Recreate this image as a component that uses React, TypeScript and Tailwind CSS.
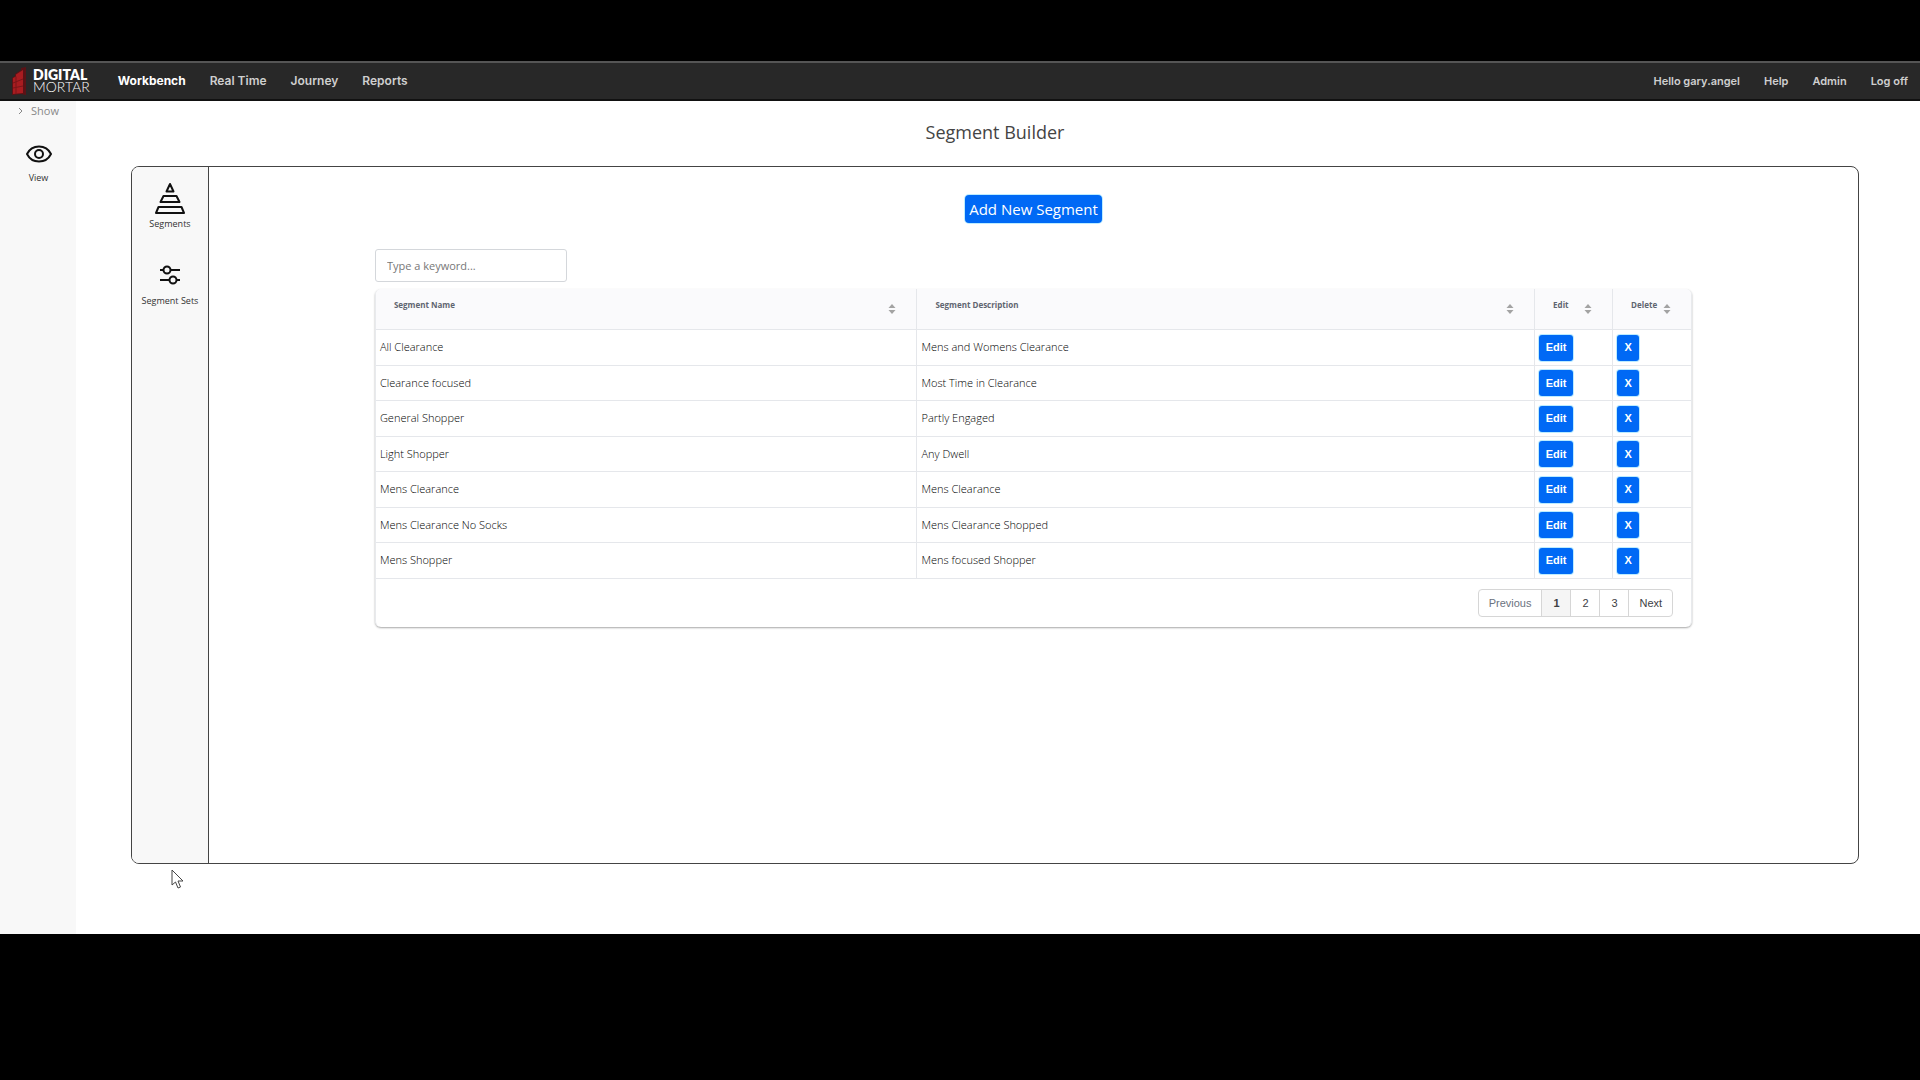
import { useState } from "react";

const SANS = "font-['Open_Sans','Noto_Sans',sans-serif]";

const segments = [
  { name: "All Clearance", description: "Mens and Womens Clearance" },
  { name: "Clearance focused", description: "Most Time in Clearance" },
  { name: "General Shopper", description: "Partly Engaged" },
  { name: "Light Shopper", description: "Any Dwell" },
  { name: "Mens Clearance", description: "Mens Clearance" },
  { name: "Mens Clearance No Socks", description: "Mens Clearance Shopped" },
  { name: "Mens Shopper", description: "Mens focused Shopper" },
];

function Logo() {
  return (
    <a href="#" className="flex items-center gap-[7px]" aria-label="Digital Mortar">
      <svg width="14" height="29" viewBox="0 0 14 29" aria-hidden="true">
        <path d="M0 11 L3 9 V7 L9 3 V1 L14 0 V28 L9 27 L0 28 Z" fill="#5c1216" />
        <path d="M1 11 L4 9.500 V7.500 L11 3 V26 L1 27 Z" fill="#a81c20" />
        <path d="M4 9.500 V27 M1 16 L11 12 M1 21 L11 19" stroke="#7a1518" strokeWidth="1" />
      </svg>
      <span className="flex flex-col font-['Lato',sans-serif] text-sm leading-3 text-white">
        <span className="font-extrabold">DIGITAL</span>
        <span className="font-light">MORTAR</span>
      </span>
    </a>
  );
}

function TopBar() {
  const link = "hover:text-white";
  return (
    <header className="flex h-10 items-center justify-between border-t-2 border-b-2 border-t-[#555] border-b-[#111] bg-[#282828] pr-3 pl-3 font-['Inter',sans-serif] text-xs font-semibold text-[#cfcfcf]">
      <div className="flex items-center gap-7">
        <Logo />
        <nav className="flex items-center gap-6">
          <a href="#" className="font-bold text-white">Workbench</a>
          <a href="#" className={link}>Real Time</a>
          <a href="#" className={link}>Journey</a>
          <a href="#" className={link}>Reports</a>
        </nav>
      </div>
      <nav className="flex items-center gap-6 text-[11px]">
        <a href="#" className={link}>Hello gary.angel</a>
        <a href="#" className={link}>Help</a>
        <a href="#" className={link}>Admin</a>
        <a href="#" className={link}>Log off</a>
      </nav>
    </header>
  );
}

function EyeIcon() {
  return (
    <svg width="26" height="18" viewBox="0 0 26 18" fill="none" stroke="#111" strokeWidth="2" aria-hidden="true">
      <path d="M1 9 C6 -1 20 -1 25 9 C20 19 6 19 1 9 Z" strokeLinejoin="round" />
      <circle cx="13" cy="9" r="4" />
    </svg>
  );
}

function PyramidIcon() {
  return (
    <svg width="30" height="32" viewBox="0 0 30 32" fill="none" stroke="#111" strokeWidth="2" strokeLinejoin="round" aria-hidden="true">
      <path d="M15 2 L18.5 9.5 H11.5 Z" />
      <path d="M8.500 14 H21.500 L24.5 20 H5.500 Z" />
      <path d="M3.500 25 H26.500 L29 31 H1 Z" />
    </svg>
  );
}

function SlidersIcon() {
  return (
    <svg width="20" height="20" viewBox="0 0 20 20" fill="none" stroke="#111" strokeWidth="2" aria-hidden="true">
      <path d="M0 5 H3 M11 5 H20 M0 15 H9 M17 15 H20" />
      <circle cx="7" cy="5" r="3.500" />
      <circle cx="13" cy="15" r="3.500" />
    </svg>
  );
}

function SortIcon() {
  return (
    <svg width="8" height="10" viewBox="0 0 8 10" fill="#a3a3a3" aria-hidden="true">
      <path d="M4 0 L7.500 4 H0.500 Z" />
      <path d="M4 10 L7.500 6 H0.500 Z" />
    </svg>
  );
}

function SortHeader({ label }: { label: string }) {
  return (
    <th className="border-r border-b border-[#e5e7eb] bg-[#fafafc] p-0 last:border-r-0">
      <button className="flex w-full items-center justify-between pr-5 pl-[18px]">
        <span className="pb-2 text-[8px] leading-3 font-bold text-[#5f6570]">{label}</span>
        <SortIcon />
      </button>
    </th>
  );
}

function Pagination() {
  const [page, setPage] = useState(1);
  const base = "h-full border-r border-[#d6d6d6] text-[#3d4044]";
  return (
    <div className="flex h-7 overflow-hidden rounded-sm border border-[#d6d6d6] font-['Liberation_Sans',sans-serif] text-[11px]">
      <button className="h-full border-r border-[#d6d6d6] px-[10px] text-[#6b7280]" onClick={() => setPage(Math.max(1, page - 1))}>
        Previous
      </button>
      {[1, 2, 3].map((n) => (
        <button
          key={n}
          onClick={() => setPage(n)}
          className={n === page ? `${base} w-[29px] bg-[#f5f5f5] font-bold` : `${base} w-[29px]`}
        >
          {n}
        </button>
      ))}
      <button className="h-full px-[10px] text-[#3d4044]" onClick={() => setPage(Math.min(3, page + 1))}>
        Next
      </button>
    </div>
  );
}

function SegmentTable() {
  const cell = "border-r border-b border-[#e5e7eb] px-1 py-0 last:border-r-0";
  const button =
    "block h-[26px] rounded-[3px] bg-[#0069f5] font-['Liberation_Sans',sans-serif] text-[11px] font-bold text-white ring-1 ring-[#8fe0ff]/60";
  return (
    <div className="overflow-hidden rounded-md border-x border-[#e8eaed] shadow-[0_1px_2px_rgba(0,0,0,0.35)]">
      <table className="w-full table-fixed border-separate border-spacing-0 text-left text-[11px] font-light text-black">
        <colgroup>
          <col className="w-7/17" />
          <col />
          <col className="w-[78px]" />
          <col className="w-[78px]" />
        </colgroup>
        <thead>
          <tr className="h-[41px]">
            <SortHeader label="Segment Name" />
            <SortHeader label="Segment Description" />
            <SortHeader label="Edit" />
            <SortHeader label="Delete" />
          </tr>
        </thead>
        <tbody>
          {segments.map((s) => (
            <tr key={s.name} className="odd:h-9 even:h-[35px]">
              <td className={cell}>{s.name}</td>
              <td className={cell}>{s.description}</td>
              <td className={cell}>
                <button className={`${button} w-[34px]`}>Edit</button>
              </td>
              <td className={cell}>
                <button className={`${button} w-[22px]`} aria-label={`Delete ${s.name}`}>X</button>
              </td>
            </tr>
          ))}
        </tbody>
      </table>
      <div className="flex h-12 items-center justify-end pr-[18px]">
        <Pagination />
      </div>
    </div>
  );
}

function Pointer() {
  return (
    <svg className="absolute top-[703px] left-10" width="14" height="20" viewBox="0 0 14 20" fill="#fff" stroke="#444" strokeWidth="1" aria-hidden="true">
      <path d="M1 1 V16 L4.500 13 L7 19 L9.500 18 L7 12 H12 Z" />
    </svg>
  );
}

export default function App() {
  return (
    <div className={`min-h-screen bg-black pt-[61px] ${SANS}`}>
      <TopBar />
      <div className="flex bg-white">
        <aside className="flex w-[76px] shrink-0 flex-col items-center bg-[#f8f8f8] pt-[2px] pl-px text-[#333]">
          <button className="flex items-center gap-2 text-[11px] leading-4 text-[#888]">
            <svg width="5" height="8" viewBox="0 0 5 8" fill="none" stroke="#888" aria-hidden="true">
              <path d="M1 1 L4 4 L1 7" />
            </svg>
            Show
          </button>
          <button className="mt-[26px] flex flex-col items-center gap-[9px] text-[9px] leading-3">
            <EyeIcon />
            View
          </button>
        </aside>
        <main className="min-w-0 flex-1 pt-[19px] pr-[61px] pb-[70px] pl-[55px]">
          <h1 className="text-center text-lg leading-6 text-[#444]">Segment Builder</h1>
          <div className="relative mt-[22px]">
            <div className="flex min-h-[698px] overflow-hidden rounded-lg border border-[#444]">
              <div className="flex w-[77px] shrink-0 flex-col items-center border-r border-[#444] bg-[#f8f8f8] pt-[15px] text-[9px] leading-3 text-[#333]">
                <button className="flex flex-col items-center gap-1">
                  <PyramidIcon />
                  Segments
                </button>
                <button className="mt-[35px] flex flex-col items-center gap-[10px] whitespace-nowrap">
                  <SlidersIcon />
                  Segment Sets
                </button>
              </div>
              <div className="flex min-w-0 flex-1 flex-col items-center pt-7">
                <button className="h-7 rounded bg-[#0069f5] px-1 text-[15px] leading-7 text-white ring-1 ring-[#8fe0ff]/60">
                  Add New Segment
                </button>
                <div className="mt-[26px] w-4/5 px-px">
                  <input
                    type="search"
                    aria-label="Type a keyword..."
                    placeholder="Type a keyword..."
                    className="mb-[7px] block h-[33px] w-48 rounded-[3px] border border-[#d4d7db] px-[11px] text-[11px] text-[#333] placeholder:text-[#777]"
                  />
                  <SegmentTable />
                </div>
              </div>
            </div>
            <Pointer />
          </div>
        </main>
      </div>
    </div>
  );
}
